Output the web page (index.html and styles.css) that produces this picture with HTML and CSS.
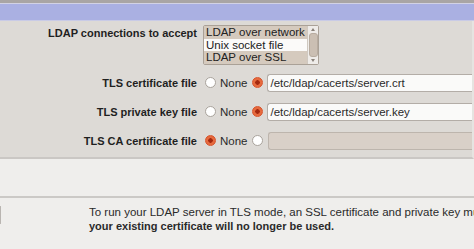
FILE: index.html
```html
<!DOCTYPE html>
<html>
<head>
<meta charset="utf-8">
<link rel="stylesheet" href="styles.css">
</head>
<body>
<div class="page">
  <div class="topline"></div>
  <div class="titlebar"></div>
  <div class="panel">
    <div class="row row-list">
      <div class="label">LDAP connections to accept</div>
      <div class="field">
        <div class="listbox">
          <div class="items">
            <div class="item sel">LDAP over network</div>
            <div class="item">Unix socket file</div>
            <div class="item sel">LDAP over SSL</div>
          </div>
          <div class="scroll">
            <div class="arrow up"></div>
            <div class="thumb"></div>
            <div class="arrow down"></div>
          </div>
        </div>
      </div>
    </div>
    <div class="row">
      <div class="label">TLS certificate file</div>
      <div class="field">
        <span class="radio"></span><span class="rtext">None</span>
        <span class="radio on"></span>
        <div class="input">/etc/ldap/cacerts/server.crt</div>
      </div>
    </div>
    <div class="row">
      <div class="label">TLS private key file</div>
      <div class="field">
        <span class="radio"></span><span class="rtext">None</span>
        <span class="radio on"></span>
        <div class="input">/etc/ldap/cacerts/server.key</div>
      </div>
    </div>
    <div class="row">
      <div class="label">TLS CA certificate file</div>
      <div class="field">
        <span class="radio on"></span><span class="rtext">None</span>
        <span class="radio"></span>
        <div class="input disabled"></div>
      </div>
    </div>
  </div>
  <div class="spacer"></div>
  <div class="bottom">
    <div class="btnedge"></div>
    <div class="note">
      <div class="line">To run your LDAP server in TLS mode, an SSL certificate and private key mu</div>
      <div class="line bold">your existing certificate will no longer be used.</div>
    </div>
  </div>
</div>
</body>
</html>
```

FILE: styles.css
```css
html, body {
  margin: 0;
  padding: 0;
  background: #efeeec;
}
.page {
  width: 474px;
  height: 249px;
  overflow: hidden;
  font-family: "Liberation Sans", Arial, sans-serif;
  color: #222;
}
.topline {
  height: 3px;
  background: #a9a5a4;
  border-bottom: 1px solid #d2d2e4;
}
.titlebar {
  height: 16px;
  background: #aab0e2;
  border-bottom: 1px solid #c9cbe6;
}
.panel {
  background: #dddad6;
  padding-top: 4px;
  border-bottom: 2px solid #cac7c4;
  height: 132px;
  border-right: 2px solid #e6e4e1;
}
.row {
  display: grid;
  grid-template-columns: 197px 1fr;
  column-gap: 7px;
  height: 29px;
  align-items: center;
}
.row-list {
  height: 42px;
  align-items: start;
  margin-bottom: 1px;
}
.label {
  text-align: right;
  font-weight: bold;
  font-size: 11px;
  white-space: nowrap;
  color: #1f1f1f;
}
.row-list .label {
  padding-top: 2px;
}
.field {
  display: flex;
  align-items: center;
  white-space: nowrap;
}
.listbox {
  display: flex;
  width: 114px;
  height: 38px;
  border: 1px solid #aaa197;
  border-radius: 2px;
  background: #ffffff;
  margin-left: -1px;
}
.items {
  flex: 1;
  font-size: 11.5px;
  line-height: 12.6px;
}
.item {
  padding-left: 2px;
  background: #fbfaf9;
}
.item.sel {
  background: #d5cabe;
}
.scroll {
  width: 10px;
  display: flex;
  flex-direction: column;
  align-items: center;
  background: #efece9;
  border-left: 1px solid #cfc8c0;
}
.arrow {
  width: 8px;
  height: 7px;
  position: relative;
}
.arrow.up::after,
.arrow.down::after {
  content: "";
  position: absolute;
  left: 2px;
  width: 0;
  height: 0;
  border-left: 2px solid transparent;
  border-right: 2px solid transparent;
}
.arrow.up::after {
  top: 2px;
  border-bottom: 3px solid #8a827a;
}
.arrow.down::after {
  top: 2px;
  border-top: 3px solid #8a827a;
}
.thumb {
  flex: 1;
  width: 7px;
  border-radius: 3px;
  background: #cbbfb3;
  border: 1px solid #b8aca0;
}
.radio {
  display: inline-block;
  width: 9px;
  height: 9px;
  border-radius: 50%;
  border: 1px solid #a9a39c;
  background: #ffffff;
  flex: none;
  margin-left: 1px;
  box-sizing: content-box;
}
.radio.on {
  border-color: #d8532b;
  background: radial-gradient(circle, #a3280f 0 2px, #e66a3e 2.5px);
}
.rtext {
  font-size: 11.5px;
  margin-left: 4px;
  margin-right: 3px;
  color: #2a2a2a;
}
.input {
  margin-left: 4px;
  flex: 1;
  height: 16px;
  line-height: 16px;
  border: 1px solid #b3ada7;
  border-right: none;
  border-radius: 3px 0 0 3px;
  background: #fafaf9;
  font-size: 11.5px;
  padding-left: 3px;
  color: #2a2a2a;
}
.input.disabled {
  margin-left: 5px;
  background: #d9d0c8;
  border-color: #bdb5ad;
}
.spacer {
  height: 37px;
  background: #efeeec;
  border-bottom: 2px solid #cbc9c6;
}
.bottom {
  display: flex;
  background: #efeeec;
  height: 52px;
}
.btnedge {
  width: 3px;
  height: 16px;
  margin-top: 8px;
  background: #e6e4e1;
  border: 1px solid #b9b5b1;
  border-left: none;
  border-radius: 0 3px 3px 0;
}
.note {
  margin-left: 88px;
  padding-top: 8px;
  font-size: 11.5px;
  line-height: 13.5px;
  white-space: nowrap;
  color: #2a2a2a;
}
.bold {
  font-weight: bold;
  font-size: 11px;
}
```
